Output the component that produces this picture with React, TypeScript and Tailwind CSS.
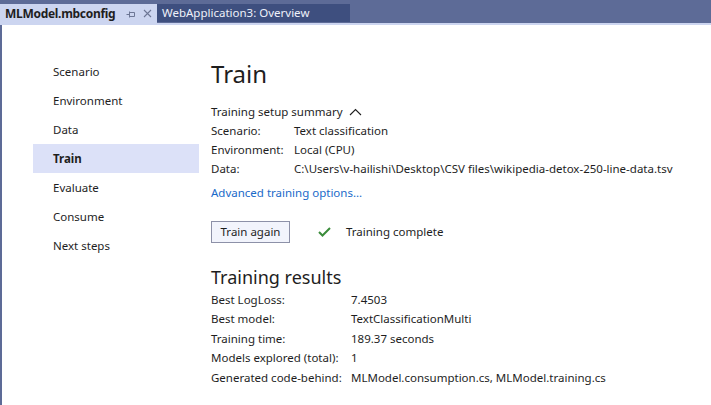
const navItems = ["Scenario", "Environment", "Data", "Train", "Evaluate", "Consume", "Next steps"];

const setupRows = [
  ["Scenario:", "Text classification"],
  ["Environment:", "Local (CPU)"],
  ["Data:", "C:\\Users\\v-hailishi\\Desktop\\CSV files\\wikipedia-detox-250-line-data.tsv"],
];

const resultRows = [
  ["Best LogLoss:", "7.4503"],
  ["Best model:", "TextClassificationMulti"],
  ["Training time:", "189.37 seconds"],
  ["Models explored (total):", "1"],
  ["Generated code-behind:", "MLModel.consumption.cs, MLModel.training.cs"],
];

const App = () => {
  return (
    <div className="w-[711px] h-[405px] overflow-hidden bg-white text-[#1e1e1e] font-['Noto_Sans',sans-serif] text-[11.5px]">
      {/* tab strip */}
      <div className="h-[23px] bg-[#5d6b97] flex items-end">
        <div className="h-[19px] w-[157px] bg-[#ccd5f0] flex items-center pl-[5px]">
          <span className="font-bold text-[12px] text-[#1e1e1e] tracking-[-0.3px]">MLModel.mbconfig</span>
          <svg className="ml-[11px]" width="10" height="10" viewBox="0 0 10 10">
            <path d="M0.5 5.5h3M3.5 2.5v6M4 3.5h4.5v4H4" fill="none" stroke="#6d7695" strokeWidth="1" />
          </svg>
          <svg className="ml-[7px]" width="9" height="9" viewBox="0 0 9 9">
            <path d="M1 1l7 7M8 1l-7 7" stroke="#6d7695" strokeWidth="1.1" />
          </svg>
        </div>
        <div className="h-[18px] mb-[1px] w-[193px] bg-[#3e4f7f] flex items-center pl-[5px]">
          <span className="text-[11.5px] text-[#eef1fa]">WebApplication3: Overview</span>
        </div>
      </div>
      <div className="h-[2px] bg-[#ccd5f0]" />
      <div className="flex h-[380px] border-l-2 border-[#5d6b97]">
        {/* sidebar */}
        <div className="w-[197px] pt-[32px] pl-[31px] shrink-0">
          {navItems.map((item) => (
            <div
              key={item}
              className={`h-[29px] w-[166px] flex items-center pl-[20px] ${
                item === "Train" ? "bg-[#dce1f8] font-bold" : ""
              }`}
            >
              {item}
            </div>
          ))}
        </div>
        {/* content */}
        <div className="pl-[12px] pt-[34px] flex flex-col">
          <div className="text-[24px] leading-[30px]">Train</div>
          <div className="mt-[13px] flex items-center h-[19px]">
            <span>Training setup summary</span>
            <svg className="ml-[6px]" width="13" height="8" viewBox="0 0 13 8">
              <path d="M1 7l5.5-5.5L12 7" fill="none" stroke="#1e1e1e" strokeWidth="1.1" />
            </svg>
          </div>
          {setupRows.map(([label, value]) => (
            <div key={label} className="flex h-[19px] items-center">
              <span className="w-[83px] shrink-0">{label}</span>
              <span>{value}</span>
            </div>
          ))}
          <div className="h-[30px] flex items-center text-[#1a6ac9]">Advanced training options...</div>
          <div className="mt-[13px] flex items-center">
            <button className="w-[79px] h-[22px] border border-[#8d91a8] bg-[#f2f4fc] text-[11.5px]">Train again</button>
            <svg className="ml-[28px]" width="13" height="10" viewBox="0 0 13 10">
              <path d="M1 5l3.5 3.5L12 1" fill="none" stroke="#3a8c3a" strokeWidth="2" />
            </svg>
            <span className="ml-[15px]">Training complete</span>
          </div>
          <div className="mt-[22px] text-[18px] leading-[24px]">Training results</div>
          <div className="mt-[1px] flex flex-col">
            {resultRows.map(([label, value]) => (
              <div key={label} className="flex h-[19.4px] items-center">
                <span className="w-[140px] shrink-0">{label}</span>
                <span>{value}</span>
              </div>
            ))}
          </div>
        </div>
      </div>
    </div>
  );
};

export default App;
